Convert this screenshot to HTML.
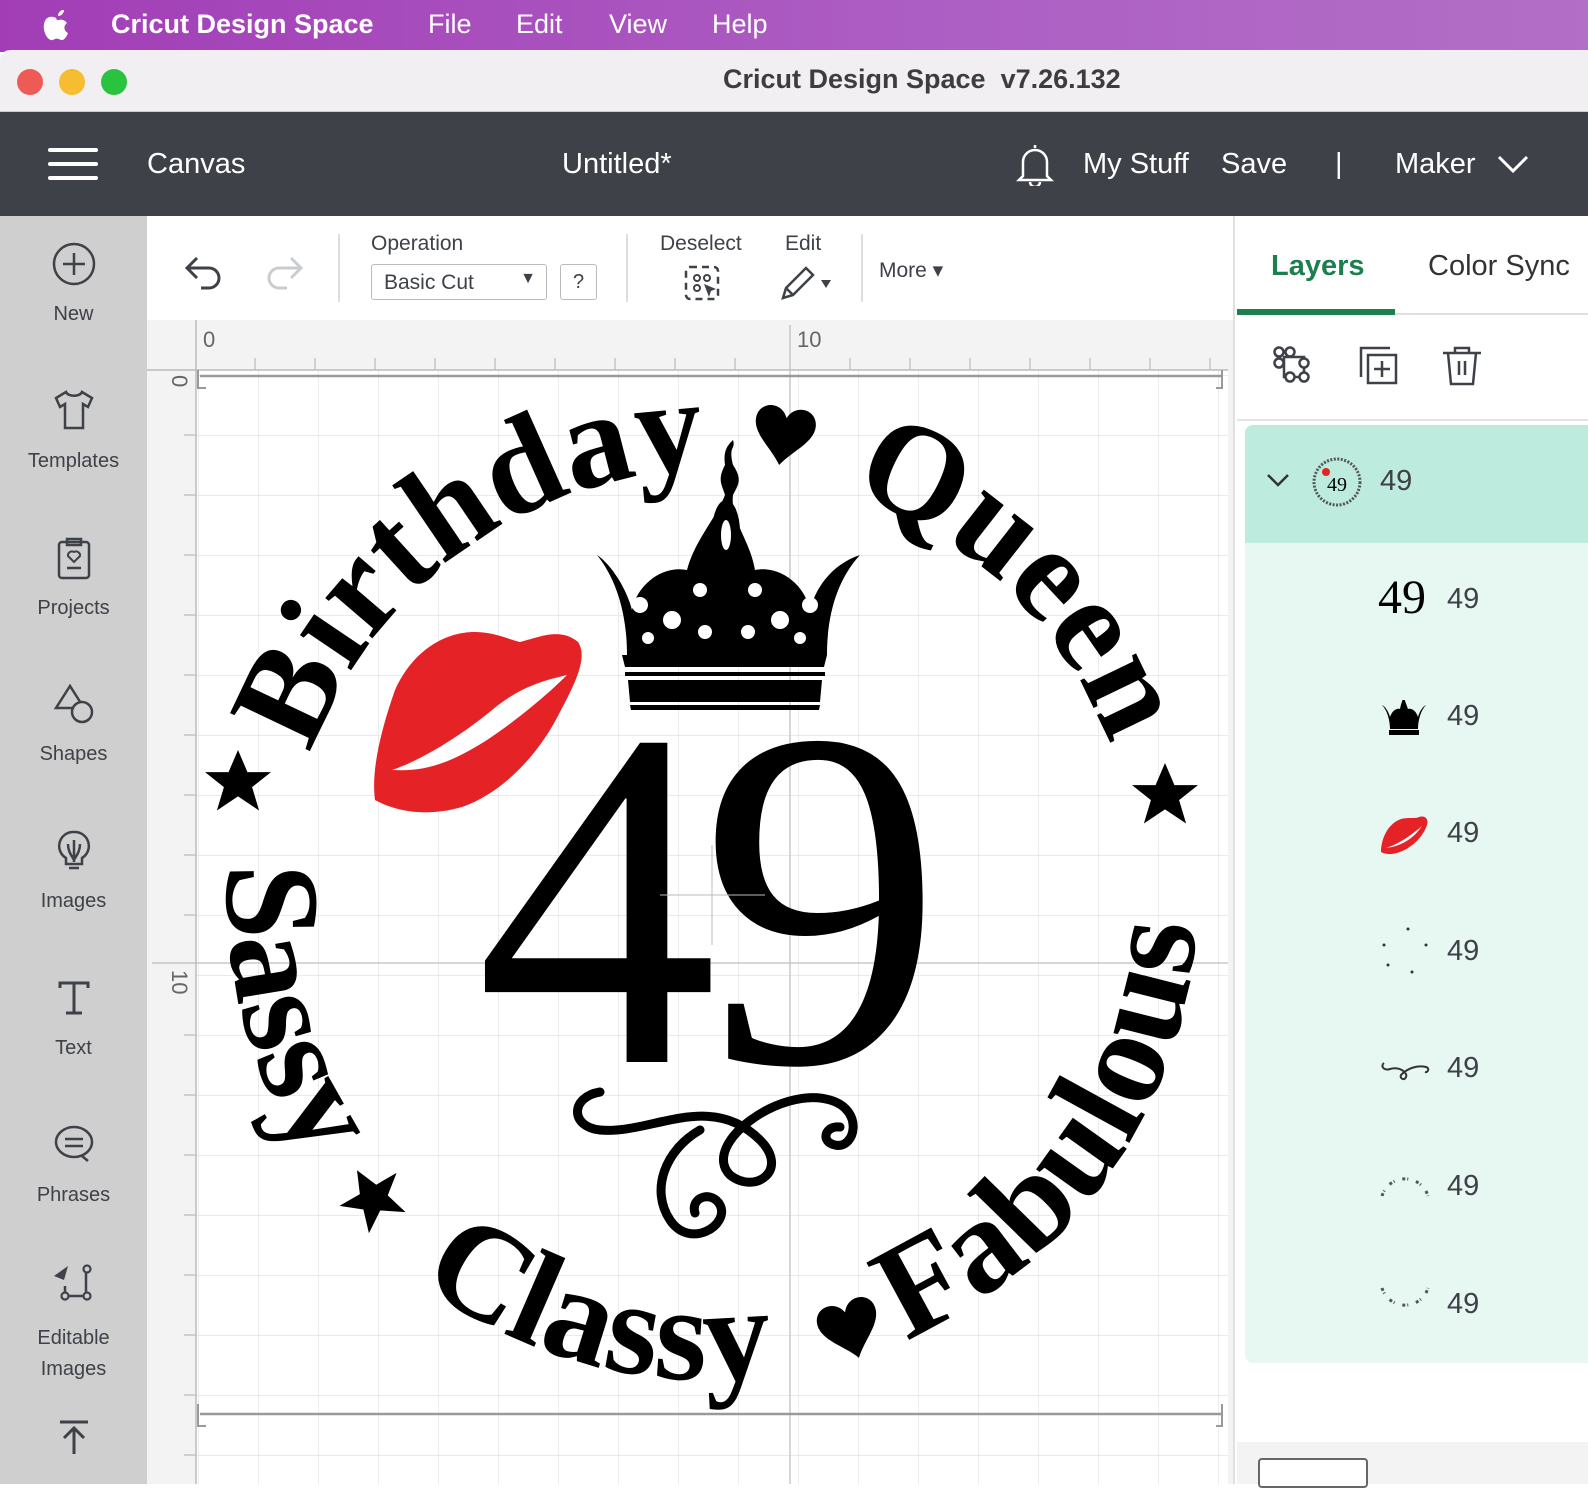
<!DOCTYPE html>
<html><head><meta charset="utf-8">
<style>
*{margin:0;padding:0;box-sizing:border-box}
body{width:1588px;height:1484px;overflow:hidden;font-family:"Liberation Sans",sans-serif;background:#fff;position:relative}
.a{position:absolute}
.menu{left:0;top:0;width:1588px;height:52px;background:linear-gradient(90deg,#a23db6,#ad5fc4 60%,#b26fc6);color:#fff;font-size:27px}
.menu span{position:absolute;top:9px}
.title{left:0;top:50px;width:1588px;height:62px;background:#f1eff2;border-radius:10px 0 0 0;border-bottom:1px solid #ccc}
.dot{position:absolute;top:69px;width:26px;height:26px;border-radius:50%}
.hdr{left:0;top:112px;width:1588px;height:104px;background:#3e4147;color:#fff;font-size:29px}
.hdr span{position:absolute;top:36px}
.side{left:0;top:216px;width:147px;height:1268px;background:#cfcfcf;color:#3e4147;font-size:20px;text-align:center}
.side div{position:absolute;left:0;width:147px}
.tb{left:147px;top:216px;width:1086px;height:104px;background:#fff;color:#3e4147}
.panel{left:1233px;top:216px;width:355px;height:1268px;background:#fff;border-left:2px solid #e0e0e0}
.row{position:absolute;left:1447px;font-size:29px;color:#3e4147}
</style></head><body>

<div class="a menu">
<svg class="a" style="left:40px;top:6px" width="32" height="38" viewBox="0 0 32 38"><path d="M22 4c-2 1-4 3-4 6 2 0 4-1 5-3 1-1 1-2 1-3z M16 12c-3-2-9-2-11 3-3 6 0 15 4 18 2 2 4 1 6 0 2-1 4 0 6 1 3 1 6-4 7-7-4-2-5-7-1-10-2-3-6-4-8-3-1 0-2 1-3-2z" fill="#fff"/></svg>
<span style="left:111px;font-weight:bold">Cricut Design Space</span>
<span style="left:428px">File</span><span style="left:516px">Edit</span><span style="left:609px">View</span><span style="left:712px">Help</span>
</div>

<div class="a title"></div>
<div class="dot" style="left:17px;background:#ee5b55"></div>
<div class="dot" style="left:59px;background:#f5bd2f"></div>
<div class="dot" style="left:101px;background:#2ac33f"></div>
<div class="a" style="left:723px;top:64px;font-size:27px;font-weight:bold;color:#3d3d3d">Cricut Design Space &nbsp;v7.26.132</div>

<div class="a hdr">
<div class="a" style="left:48px;top:36px;width:50px;height:4px;background:#fff;border-radius:2px"></div>
<div class="a" style="left:48px;top:50px;width:50px;height:4px;background:#fff;border-radius:2px"></div>
<div class="a" style="left:48px;top:64px;width:50px;height:4px;background:#fff;border-radius:2px"></div>
<span style="left:147px">Canvas</span><span style="left:562px">Untitled*</span>
<svg class="a" style="left:1014px;top:30px" width="42" height="44" viewBox="0 0 42 44"><path d="M21 3v3M9 34V20a12 12 0 0 1 24 0v14l4 4H5z M16 40a5 5 0 0 0 10 0" fill="none" stroke="#fff" stroke-width="2.5"/></svg>
<span style="left:1083px">My Stuff</span><span style="left:1221px">Save</span><span style="left:1335px">|</span><span style="left:1395px">Maker</span>
<svg class="a" style="left:1497px;top:42px" width="32" height="20"><path d="M2 3l14 14 14-14" fill="none" stroke="#fff" stroke-width="3"/></svg>
</div>

<div class="a side">
<div style="top:26px"><svg width="44" height="44"><circle cx="22" cy="22" r="20" fill="none" stroke="#3e4147" stroke-width="2.5"/><path d="M22 11v22M11 22h22" stroke="#3e4147" stroke-width="2.5"/></svg></div>
<div style="top:87px">New</div>
<div style="top:172px"><svg width="44" height="44"><path d="M14 4l-10 6 4 9 5-3v24h18V16l5 3 4-9-10-6c-2 5-14 5-16 0z" fill="none" stroke="#3e4147" stroke-width="2.5"/></svg></div>
<div style="top:234px">Templates</div>
<div style="top:318px"><svg width="44" height="48"><rect x="7" y="8" width="30" height="36" rx="3" fill="none" stroke="#3e4147" stroke-width="2.5"/><path d="M15 5h14v6H15z M15 34h14" fill="none" stroke="#3e4147" stroke-width="2.5"/><path d="M22 28l-6-6a4 4 0 0 1 6-4 4 4 0 0 1 6 4z" fill="none" stroke="#3e4147" stroke-width="2"/></svg></div>
<div style="top:381px">Projects</div>
<div style="top:466px"><svg width="44" height="44"><path d="M18 4L4 26h28z" fill="none" stroke="#3e4147" stroke-width="2.5"/><circle cx="30" cy="30" r="10" fill="#cfcfcf" stroke="#3e4147" stroke-width="2.5"/></svg></div>
<div style="top:527px">Shapes</div>
<div style="top:612px"><svg width="44" height="48"><path d="M22 4a14 14 0 0 0-8 26v6h16v-6A14 14 0 0 0 22 4z M17 40h10 M22 12v22 M16 16c0 8 4 12 6 16 M28 16c0 8-4 12-6 16" fill="none" stroke="#3e4147" stroke-width="2.5"/></svg></div>
<div style="top:674px">Images</div>
<div style="top:762px"><svg width="44" height="40"><path d="M8 10V5h28v5 M22 5v30 M14 35h16" fill="none" stroke="#3e4147" stroke-width="3"/></svg></div>
<div style="top:821px">Text</div>
<div style="top:906px"><svg width="44" height="44"><path d="M22 5c10 0 18 7 18 15s-8 15-18 15c-10 0-18-7-18-15S12 5 22 5z M30 34l6 5" fill="none" stroke="#3e4147" stroke-width="2.5"/><path d="M13 17h18M13 24h18" stroke="#3e4147" stroke-width="2.5"/></svg></div>
<div style="top:968px">Phrases</div>
<div style="top:1040px"><svg width="44" height="46"><path d="M2 20l14-10-4 14z" fill="#3e4147"/><path d="M14 40h20M34 14v26M13 30v8" stroke="#3e4147" stroke-width="2.5"/><circle cx="13" cy="40" r="3.5" fill="#cfcfcf" stroke="#3e4147" stroke-width="2.2"/><circle cx="35" cy="40" r="3.5" fill="#cfcfcf" stroke="#3e4147" stroke-width="2.2"/><circle cx="35" cy="13" r="3.5" fill="#cfcfcf" stroke="#3e4147" stroke-width="2.2"/></svg></div>
<div style="top:1107px;line-height:31px">Editable<br>Images</div>
<div style="top:1202px"><svg width="44" height="40"><path d="M8 4h28M22 36V10M12 20l10-10 10 10" fill="none" stroke="#3e4147" stroke-width="3"/></svg></div>
</div>

<div class="a tb">
<svg class="a" style="left:36px;top:38px" width="44" height="36"><path d="M14 4L4 14l10 10M4 14h22a10 10 0 0 1 0 20h-8" fill="none" stroke="#3e4147" stroke-width="3"/></svg>
<svg class="a" style="left:114px;top:38px" width="44" height="36"><path d="M30 4l10 10-10 10M40 14H18a10 10 0 0 0 0 20h8" fill="none" stroke="#cacdd0" stroke-width="3"/></svg>
<div class="a" style="left:191px;top:18px;width:2px;height:68px;background:#ddd"></div>
<div class="a" style="left:224px;top:16px;font-size:21px">Operation</div>
<div class="a" style="left:224px;top:48px;width:176px;height:36px;border:1px solid #bbb;border-radius:3px;font-size:21px;padding:6px 12px">Basic Cut<span style="position:absolute;right:10px;top:5px;font-size:16px">▼</span></div>
<div class="a" style="left:413px;top:48px;width:37px;height:36px;border:1px solid #bbb;border-radius:3px;font-size:20px;text-align:center;padding-top:6px">?</div>
<div class="a" style="left:479px;top:18px;width:2px;height:68px;background:#ddd"></div>
<div class="a" style="left:513px;top:16px;font-size:21px">Deselect</div>
<svg class="a" style="left:536px;top:48px" width="40" height="40"><rect x="3" y="3" width="32" height="32" rx="4" fill="none" stroke="#3e4147" stroke-width="2.5" stroke-dasharray="7 5"/><circle cx="14" cy="14" r="3" fill="none" stroke="#3e4147" stroke-width="2"/><circle cx="24" cy="14" r="3" fill="none" stroke="#3e4147" stroke-width="2"/><circle cx="14" cy="24" r="3" fill="none" stroke="#3e4147" stroke-width="2"/><path d="M21 20l12 5-5 2-2 6z" fill="#3e4147"/></svg>
<div class="a" style="left:638px;top:16px;font-size:21px">Edit</div>
<svg class="a" style="left:630px;top:48px" width="60" height="40"><path d="M6 34l3-10 20-20 7 7-20 20z M9 24l7 7" fill="none" stroke="#3e4147" stroke-width="2.5"/><path d="M44 16h10l-5 8z" fill="#3e4147"/></svg>
<div class="a" style="left:714px;top:18px;width:2px;height:68px;background:#ddd"></div>
<div class="a" style="left:732px;top:42px;font-size:21px">More ▾</div>
</div>

<svg class="a" style="left:147px;top:320px" width="1086" height="1164" viewBox="147 320 1086 1164">
<defs>
<pattern id="g" x="198" y="375" width="60" height="60" patternUnits="userSpaceOnUse"><path d="M0 0V60M0 0H60" stroke="#dedede" stroke-width="1.2" fill="none"/></pattern>
<path id="top" d="M288.6 932 A425 425 0 1 1 1135.4 932"/>
<path id="bot" d="M234.4 810.8 A485 485 0 1 0 1189.6 810.8"/>
<path id="hrt" d="M0 -8C-6 -22 -26 -18 -24 -2 -22 10 -8 18 0 30 8 18 22 10 24 -2 26 -18 6 -22 0 -8z"/>
<path id="star" d="M0-20L5.9-6.2 20.6-6.2 8.8 3.2 13.2 17.8 0 9 -13.2 17.8-8.8 3.2-20.6-6.2-5.9-6.2z"/>
</defs>
<rect x="147" y="320" width="1086" height="1164" fill="#fff"/>
<rect x="196" y="370" width="1037" height="1114" fill="url(#g)"/>
<path d="M790 370V1484M196 963H1233" stroke="#c9c9c9" stroke-width="1.5"/>
<rect x="147" y="320" width="1086" height="50" fill="#f3f3f3"/>
<rect x="147" y="320" width="49" height="1164" fill="#f3f3f3"/>
<path d="M196 320V1484M147 370H1233" stroke="#bbb" stroke-width="1.5"/>
<g stroke="#bbb" stroke-width="1.2">
<path d="M255 358v12M315 358v12M375 358v12M435 358v12M495 358v12M555 358v12M615 358v12M675 358v12M735 358v12M850 358v12M910 358v12M970 358v12M1030 358v12M1090 358v12M1150 358v12M1210 358v12"/>
<path d="M184 435h12M184 495h12M184 555h12M184 615h12M184 675h12M184 735h12M184 795h12M184 855h12M184 915h12M184 1035h12M184 1095h12M184 1155h12M184 1215h12M184 1275h12M184 1335h12M184 1395h12M184 1455h12"/>
<path d="M790 325v45M152 963h44"/>
</g>
<g fill="#666" font-size="22" font-family="Liberation Sans">
<text x="203" y="347">0</text><text x="797" y="347">10</text>
<text transform="translate(172,375) rotate(90)">0</text>
<text transform="translate(172,970) rotate(90)">10</text>
</g>
<rect x="1228" y="320" width="5" height="1164" fill="#f3f3f3"/>
<path d="M200 376H1222M200 1414H1222" stroke="#999" stroke-width="2.5"/>
<path d="M198 370v18h8M1222 370v18h-6M198 1404v22h8M1222 1404v22h-6" stroke="#999" stroke-width="2" fill="none"/>
<g font-family="Liberation Serif" font-weight="bold" font-size="135" fill="#000">
<text><textPath href="#top" startOffset="31.2%" text-anchor="middle">Birthday</textPath></text>
<text><textPath href="#top" startOffset="73.2%" text-anchor="middle">Queen</textPath></text>
<text><textPath href="#bot" startOffset="12.5%" text-anchor="middle">Sassy</textPath></text>
<text><textPath href="#bot" startOffset="42.5%" text-anchor="middle">Classy</textPath></text>
<text><textPath href="#bot" startOffset="77.5%" text-anchor="middle">Fabulous</textPath></text>
</g>
<g fill="#000">
<use href="#hrt" transform="translate(785,428) rotate(9) scale(1.25)"/>
<use href="#hrt" transform="translate(848,1322) rotate(-17) scale(1.25)"/>
<use href="#star" transform="translate(238,782) scale(1.6)"/>
<use href="#star" transform="translate(1165,795) scale(1.6)"/>
<use href="#star" transform="translate(373,1198) scale(1.6) rotate(-30)"/>
</g>
<text x="700" y="1062" text-anchor="middle" font-family="Liberation Serif" font-size="485" letter-spacing="-18" fill="#000">49</text>
<path d="M660 895H765M712 845V945" stroke="#bbb" stroke-width="1"/>
<path d="M375 800c-4-30 6-70 20-110 18-40 50-58 80-58 20 0 35 8 45 10 20-5 40-15 58 0 10 15-2 40-18 70-20 40-55 80-98 95-35 10-65 5-87-7z" fill="#e52226"/>
<path d="M392 770c30-10 70-35 100-60 30-25 55-30 75-35-20 20-50 45-80 65-35 22-60 32-95 30z" fill="#fff"/>
<g fill="#000">
<path d="M597 555c20 25 30 60 30 100h200c0-40 10-75 33-100-30 10-45 35-50 55-5-25-30-45-55-40-5-30-25-50-22-75 5-10 10-15 0-30-5-20 3-15-0-25-5 5-10 10-8 25-8 15-3 20 0 30-10 25-30 45-38 75-25-5-50 15-55 40-5-20-20-45-35-55z"/>
<ellipse cx="726" cy="532" rx="14" ry="32"/>
<path d="M622 655h205l-3 12H625z M625 672h200v4H625z M628 680h194l-2 22H630z M630 705h190l-1 5H631z"/>
</g>
<g fill="#fff">
<circle cx="640" cy="605" r="8"/><circle cx="672" cy="620" r="9"/><circle cx="700" cy="590" r="7"/><circle cx="755" cy="590" r="7"/><circle cx="780" cy="620" r="9"/><circle cx="810" cy="605" r="8"/><circle cx="648" cy="638" r="6"/><circle cx="705" cy="632" r="7"/><circle cx="748" cy="632" r="7"/><circle cx="800" cy="638" r="6"/><ellipse cx="726" cy="535" rx="5" ry="15"/>
</g>
<g fill="none" stroke="#000" stroke-width="9" stroke-linecap="round">
<path d="M600 1092c-30 5-30 35 0 38 50 5 110-40 160 10 30 30-5 55-30 35-30-30 50-90 100-75 35 10 25 50 5 45-15-3-10-20 5-18"/>
<path d="M700 1130c-35 20-50 60-30 90 20 30 60 5 50-15-8-15-30-8-25 8"/>
</g>
</svg>

<div class="a panel"></div>
<div class="a" style="left:1271px;top:250px;font-size:29px;font-weight:bold;color:#1c7f4d">Layers</div>
<div class="a" style="left:1428px;top:250px;font-size:29px;color:#333;white-space:nowrap">Color Sync</div>
<div class="a" style="left:1237px;top:313px;width:351px;height:2px;background:#e0e0e0"></div>
<div class="a" style="left:1237px;top:309px;width:158px;height:6px;background:#1c7f4d"></div>
<svg class="a" style="left:1272px;top:345px" width="44" height="44"><g fill="none" stroke="#3e4147" stroke-width="2.5"><rect x="12" y="12" width="20" height="20"/><circle cx="7" cy="7" r="4.5" fill="#fff"/><circle cx="18" cy="7" r="4.5" fill="#fff"/><circle cx="7" cy="18" r="4.5" fill="#fff"/><circle cx="32" cy="18" r="4.5" fill="#fff"/><circle cx="18" cy="32" r="4.5" fill="#fff"/><circle cx="32" cy="32" r="4.5" fill="#fff"/></g></svg>
<svg class="a" style="left:1358px;top:345px" width="44" height="44"><g fill="none" stroke="#3e4147" stroke-width="2.5"><path d="M3 32V3h29"/><rect x="10" y="10" width="28" height="28"/><path d="M24 16v16M16 24h16"/></g></svg>
<svg class="a" style="left:1440px;top:345px" width="44" height="44"><g fill="none" stroke="#3e4147" stroke-width="2.5"><path d="M3 8h38M15 8V3h14v5M8 8l3 31h22l3-31M19 16v14M25 16v14"/></g></svg>
<div class="a" style="left:1237px;top:419px;width:351px;height:2px;background:#e4e4e4"></div>
<div class="a" style="left:1245px;top:425px;width:343px;height:938px;background:#e7f7f2;border-radius:8px 0 0 8px"></div>
<div class="a" style="left:1245px;top:425px;width:343px;height:118px;background:#bdebdd;border-radius:8px 0 0 0"></div>
<svg class="a" style="left:1266px;top:472px" width="24" height="16"><path d="M2 3l10 10 10-10" fill="none" stroke="#333" stroke-width="2.5"/></svg>
<svg class="a" style="left:1310px;top:455px" width="54" height="54"><circle cx="27" cy="27" r="23" fill="none" stroke="#555" stroke-width="3" stroke-dasharray="2 1.5"/><circle cx="16" cy="17" r="4" fill="#e52226"/><text x="27" y="36" text-anchor="middle" font-family="Liberation Serif" font-size="20">49</text></svg>
<div class="row" style="left:1380px;top:465px">49</div>
<div class="a" style="left:1378px;top:570px;font-family:'Liberation Serif',serif;font-size:48px">49</div>
<div class="row" style="top:583px">49</div>
<svg class="a" style="left:1380px;top:700px" width="48" height="36"><path d="M2 5c5 5 8 15 8 24h28c0-9 3-19 8-24-4 2-7 8-8 12-2-6-6-9-10-8-2-6-4-9-4-15-1 6-3 9-4 15-4-1-8 2-10 8-1-4-4-10-8-12z M9 30h30v5H9z"/></svg>
<div class="row" style="top:700px">49</div>
<svg class="a" style="left:1378px;top:812px" width="52" height="44"><path d="M3 40c0-12 6-28 20-33 8-2 14 0 18-2 6-2 10 2 8 8-4 12-16 24-30 28-8 2-12 1-16-1z" fill="#e52226"/><path d="M8 36c10-3 22-10 36-22-8 12-20 20-36 22z" fill="#fff"/></svg>
<div class="row" style="top:817px">49</div>
<svg class="a" style="left:1378px;top:925px" width="52" height="52"><g fill="#333"><circle cx="30" cy="4" r="1.5"/><circle cx="6" cy="20" r="1.5"/><circle cx="48" cy="20" r="1.5"/><circle cx="10" cy="40" r="1.5"/><circle cx="34" cy="47" r="1.5"/></g></svg>
<div class="row" style="top:935px">49</div>
<svg class="a" style="left:1378px;top:1053px" width="54" height="32"><path d="M6 10c-4 3 0 8 6 6 10-3 18 4 16 8-2 5-8 0-4-3 6-6 16-9 24-7 4 1 2 6-1 5" fill="none" stroke="#333" stroke-width="2"/></svg>
<div class="row" style="top:1052px">49</div>
<svg class="a" style="left:1378px;top:1168px" width="54" height="34"><path d="M4 28A24 24 0 0 1 50 28" fill="none" stroke="#555" stroke-width="3" stroke-dasharray="3 2 1 8"/></svg>
<div class="row" style="top:1170px">49</div>
<svg class="a" style="left:1378px;top:1280px" width="54" height="40"><path d="M4 8A24 24 0 0 0 50 8" fill="none" stroke="#555" stroke-width="3" stroke-dasharray="3 2 1 8"/></svg>
<div class="row" style="top:1288px">49</div>
<div class="a" style="left:1237px;top:1442px;width:351px;height:42px;background:#f3f3f3"></div>
<div class="a" style="left:1258px;top:1458px;width:110px;height:30px;border:2px solid #666;border-radius:4px;background:#fff"></div>
</body></html>
